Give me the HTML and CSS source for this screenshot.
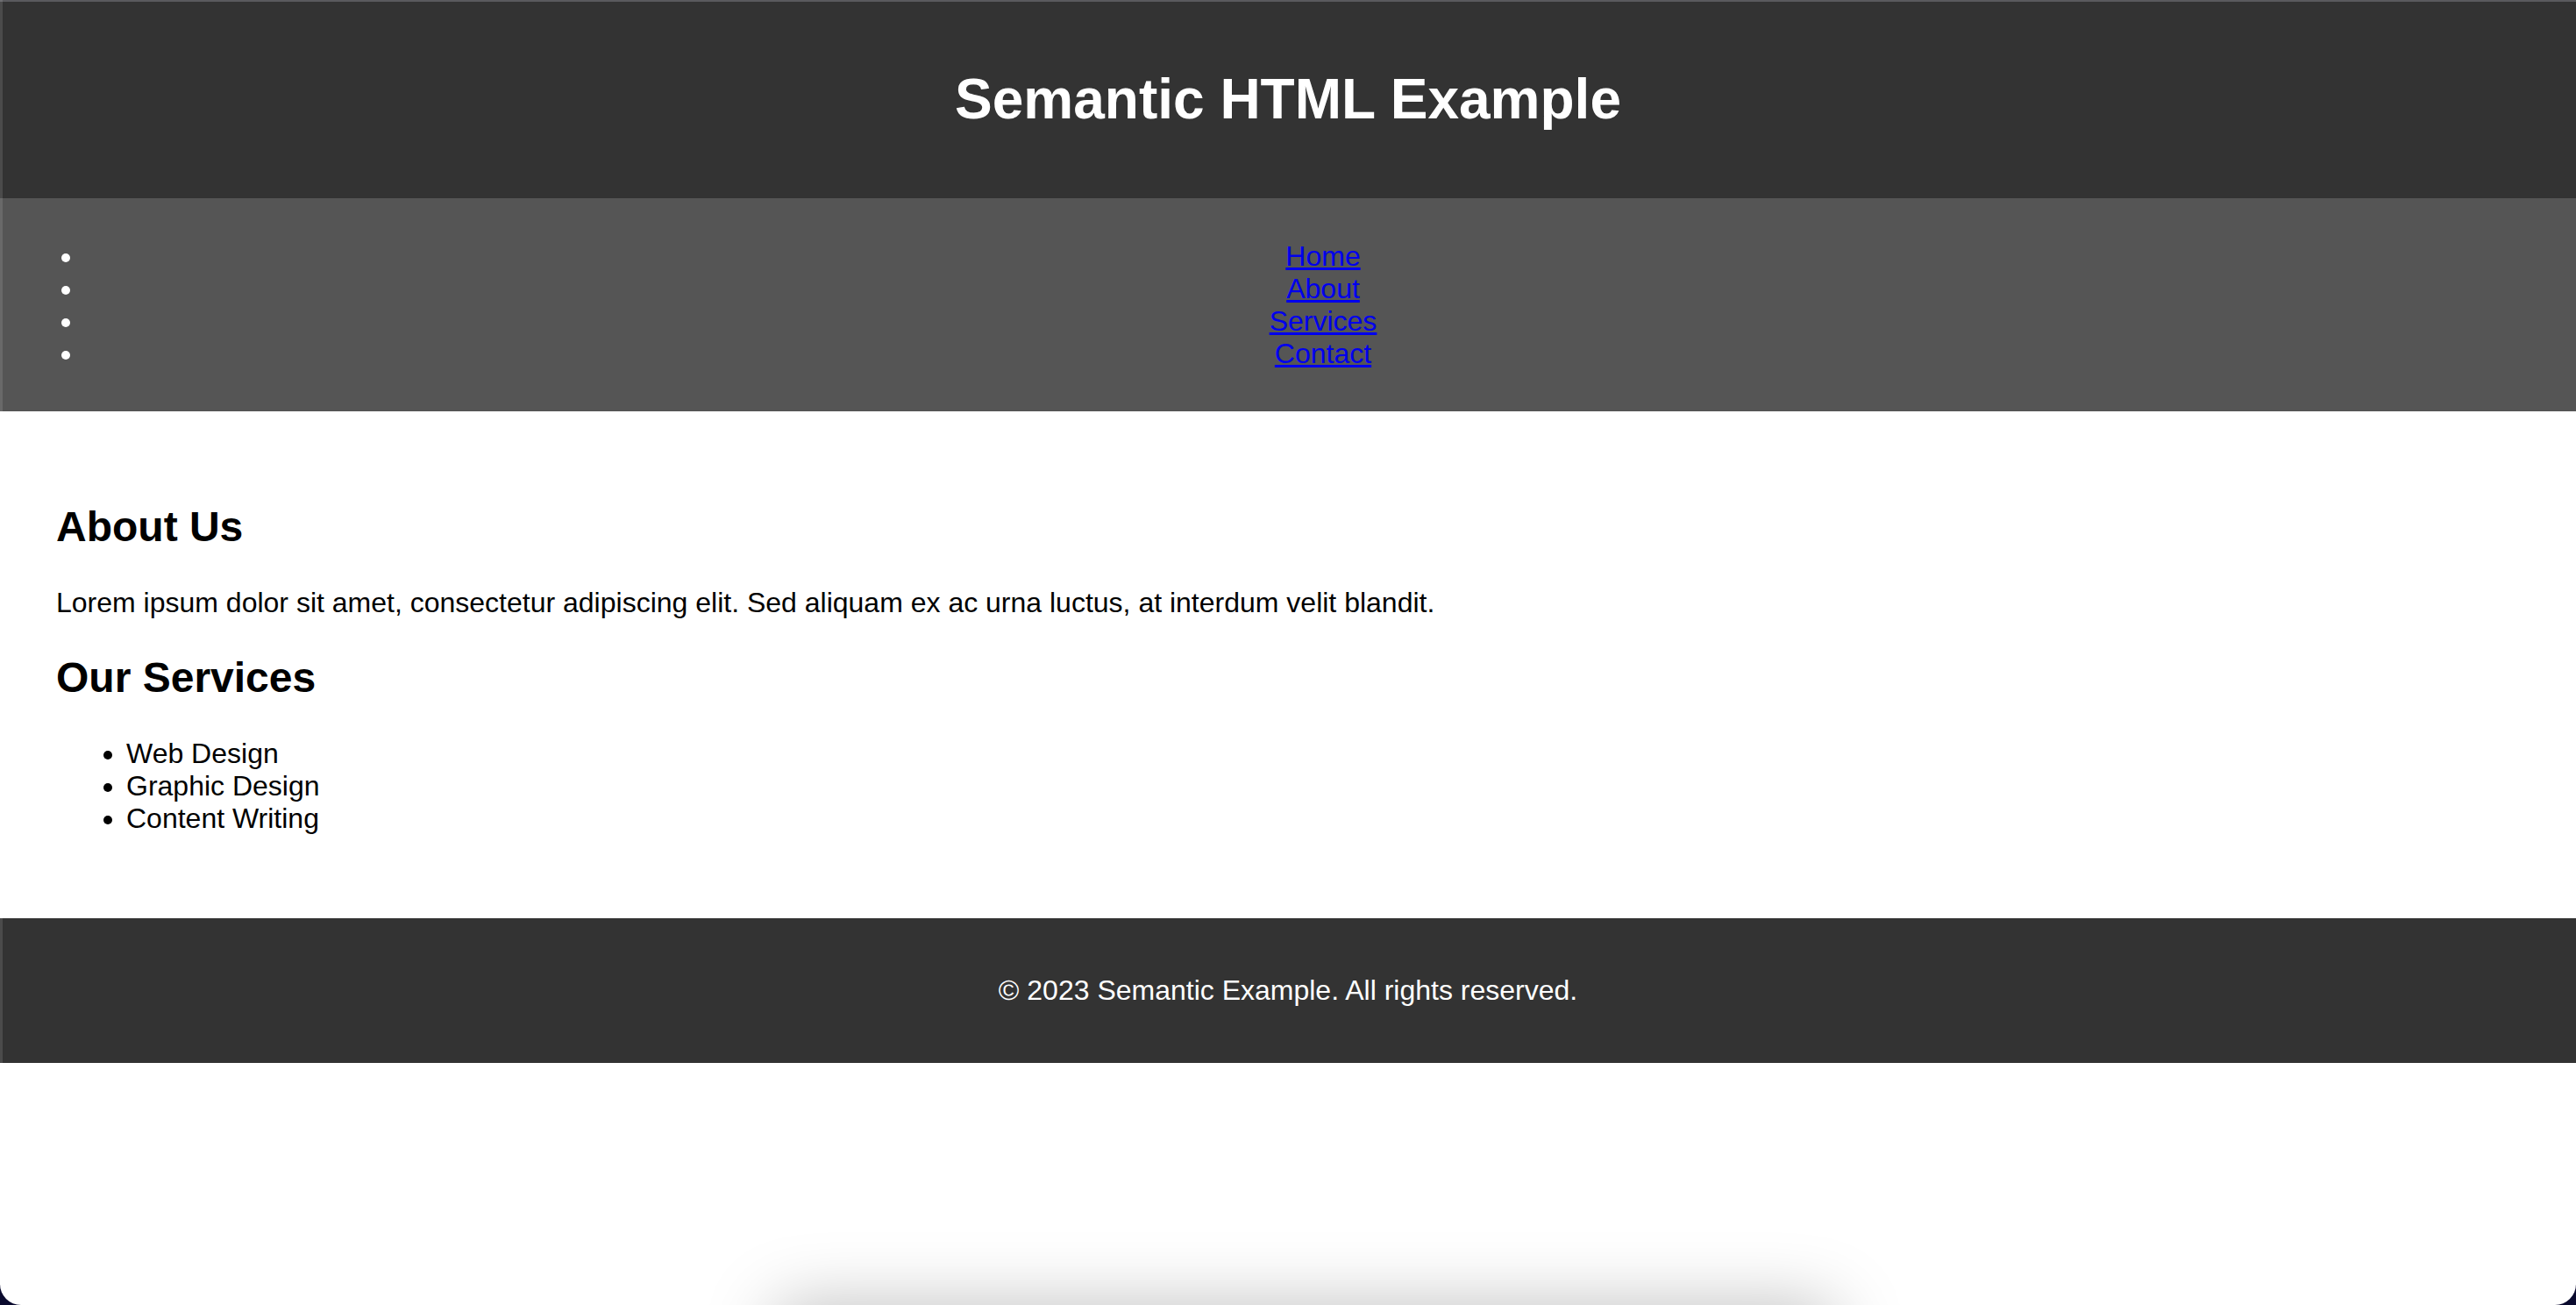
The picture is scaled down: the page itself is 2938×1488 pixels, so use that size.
FILE: index.html
```html
<!DOCTYPE html>
<html lang="en">
<head>
<meta charset="utf-8">
<title>Semantic HTML Example</title>
<link rel="stylesheet" href="styles.css">
</head>
<body>
<header class="site-header">
  <h1 class="site-title">Semantic HTML Example</h1>
</header>
<nav class="site-nav">
  <ul class="nav-list">
    <li><a href="#">Home</a></li>
    <li><a href="#">About</a></li>
    <li><a href="#">Services</a></li>
    <li><a href="#">Contact</a></li>
  </ul>
</nav>
<main class="site-main">
  <section class="block">
    <h2 class="block-title">About Us</h2>
    <p class="block-text">Lorem ipsum dolor sit amet, consectetur adipiscing elit. Sed aliquam ex ac urna luctus, at interdum velit blandit.</p>
  </section>
  <section class="block">
    <h2 class="block-title">Our Services</h2>
    <ul class="service-list">
      <li>Web Design</li>
      <li>Graphic Design</li>
      <li>Content Writing</li>
    </ul>
  </section>
</main>
<footer class="site-footer">
  <p class="footer-text">&copy; 2023 Semantic Example. All rights reserved.</p>
</footer>
<div class="window-frame"><div class="dock-shadow"></div></div>
</body>
</html>
```
FILE: styles.css
```css
html, body {
  height: 100%;
}
body {
  margin: 0;
  border-top: 2px solid #5a5a5e;
  background: #ffffff;
  color: #000000;
  font-family: "Liberation Sans", Arial, Helvetica, sans-serif;
  font-size: 32px;
  line-height: 1.155;
  overflow: hidden;
}
.site-header {
  background: #333333;
  color: #ffffff;
  text-align: center;
  padding: 32px;
}
.site-title {
  font-size: 64px;
  font-weight: bold;
  margin: 42.88px 0;
}
.site-nav {
  background: #555555;
  color: #ffffff;
  text-align: center;
  padding: 16px;
}
.nav-list {
  margin: 32px 0;
  padding-left: 80px;
}
.nav-list a {
  color: #0000ee;
  text-decoration: underline;
}
.site-main {
  padding: 64px;
}
.block-title {
  font-size: 48px;
  font-weight: bold;
  margin: 39.84px 0;
}
.block-text {
  margin: 32px 0;
}
.service-list {
  margin: 32px 0;
  padding-left: 80px;
}
.site-footer {
  background: #333333;
  color: #ffffff;
  text-align: center;
  padding: 32px;
}
.footer-text {
  margin: 32px 0;
}
.window-frame {
  position: fixed;
  left: 0;
  top: 0;
  right: 0;
  bottom: 0;
  pointer-events: none;
  border-left: 3px solid rgba(255, 255, 255, 0.12);
  border-radius: 0 0 24px 24px;
  box-shadow: 0 0 0 60px #0a0a2e;
  overflow: hidden;
}
.dock-shadow {
  position: absolute;
  left: 880px;
  width: 1210px;
  top: 100%;
  height: 80px;
  border-radius: 20px;
  background: #ffffff;
  box-shadow: 0 0 80px rgba(0, 0, 0, 0.26);
}
```
